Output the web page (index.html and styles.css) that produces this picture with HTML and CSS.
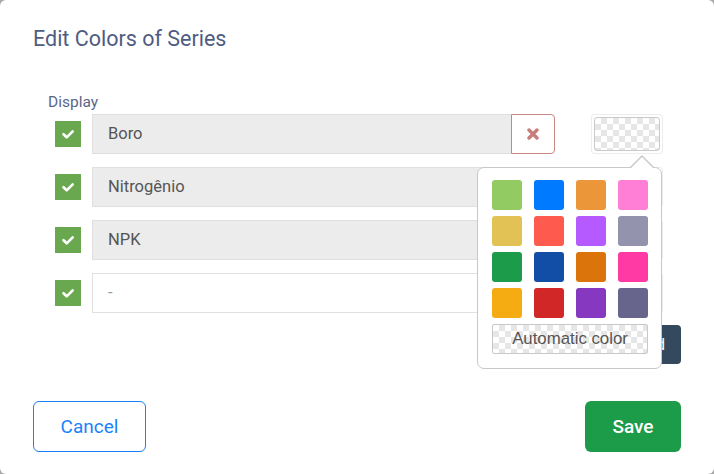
FILE: index.html
```html
<!DOCTYPE html>
<html lang="en">
<head>
<meta charset="utf-8">
<title>Edit Colors of Series</title>
<link rel="stylesheet" href="styles.css">
</head>
<body>
<div class="modal">
  <h2 class="title">Edit Colors of Series</h2>
  <div class="body">
    <div class="label">Display</div>
    <div class="rows">
      <div class="row">
        <span class="check"><svg viewBox="0 0 26 26" width="26" height="26"><path d="M8.5 13.2l3.2 3.1 6-6" fill="none" stroke="#fff" stroke-width="2.6" stroke-linecap="round" stroke-linejoin="round"/></svg></span>
        <div class="name filled">Boro</div>
        <button class="remove"><svg viewBox="0 0 12 12" width="12" height="12"><path d="M2 2L10 10M10 2L2 10" stroke="#c97d7b" stroke-width="3.4" stroke-linecap="round"/></svg></button>
        <div class="swatch-btn"><span class="swatch checker"></span></div>
      </div>
      <div class="row">
        <span class="check"><svg viewBox="0 0 26 26" width="26" height="26"><path d="M8.5 13.2l3.2 3.1 6-6" fill="none" stroke="#fff" stroke-width="2.6" stroke-linecap="round" stroke-linejoin="round"/></svg></span>
        <div class="name filled">Nitrogênio</div>
        <button class="remove"><svg viewBox="0 0 12 12" width="12" height="12"><path d="M2 2L10 10M10 2L2 10" stroke="#c97d7b" stroke-width="3.4" stroke-linecap="round"/></svg></button>
        <div class="swatch-btn"><span class="swatch checker"></span></div>
      </div>
      <div class="row">
        <span class="check"><svg viewBox="0 0 26 26" width="26" height="26"><path d="M8.5 13.2l3.2 3.1 6-6" fill="none" stroke="#fff" stroke-width="2.6" stroke-linecap="round" stroke-linejoin="round"/></svg></span>
        <div class="name filled">NPK</div>
        <button class="remove"><svg viewBox="0 0 12 12" width="12" height="12"><path d="M2 2L10 10M10 2L2 10" stroke="#c97d7b" stroke-width="3.4" stroke-linecap="round"/></svg></button>
        <div class="swatch-btn"><span class="swatch checker"></span></div>
      </div>
      <div class="row">
        <span class="check"><svg viewBox="0 0 26 26" width="26" height="26"><path d="M8.5 13.2l3.2 3.1 6-6" fill="none" stroke="#fff" stroke-width="2.6" stroke-linecap="round" stroke-linejoin="round"/></svg></span>
        <div class="name empty">-</div>
        <button class="remove"><svg viewBox="0 0 12 12" width="12" height="12"><path d="M2 2L10 10M10 2L2 10" stroke="#c97d7b" stroke-width="3.4" stroke-linecap="round"/></svg></button>
        <div class="swatch-btn"><span class="swatch checker"></span></div>
      </div>
    </div>
    <div class="add-row"><button class="add">Add</button></div>
  </div>
  <div class="footer">
    <button class="cancel">Cancel</button>
    <button class="save">Save</button>
  </div>

  <div class="popover">
    <div class="grid">
      <span class="color c1"></span><span class="color c2"></span><span class="color c3"></span><span class="color c4"></span>
      <span class="color c5"></span><span class="color c6"></span><span class="color c7"></span><span class="color c8"></span>
      <span class="color c9"></span><span class="color c10"></span><span class="color c11"></span><span class="color c12"></span>
      <span class="color c13"></span><span class="color c14"></span><span class="color c15"></span><span class="color c16"></span>
    </div>
    <button class="auto checker">Automatic color</button>
  </div>
</div>
</body>
</html>
```
FILE: styles.css
```css
* { box-sizing: border-box; }
html, body { margin: 0; padding: 0; }
body {
  background: #a9a9a9;
  width: 714px;
  height: 474px;
  overflow: hidden;
  font-family: Roboto, "Liberation Sans", sans-serif;
}
.modal {
  position: relative;
  width: 714px;
  height: 474px;
  background: #fff;
  border-radius: 6px;
  padding: 0 33px;
  display: flex;
  flex-direction: column;
}
.title {
  margin: 26px 0 0;
  font-size: 21.5px;
  line-height: 26px;
  font-weight: 400;
  color: #4f5c82;
}
.body {
  padding-left: 15px;
}
.label {
  margin-top: 41px;
  font-size: 15.5px;
  line-height: 18px;
  color: #5a6688;
}
.rows {
  margin-top: 3px;
  display: flex;
  flex-direction: column;
  gap: 13px;
}
.row {
  display: flex;
  align-items: center;
  height: 40px;
}
.check {
  width: 26px;
  height: 26px;
  margin-left: 7px;
  margin-right: 11px;
  background: #6aa84f;
  display: flex;
}
.name {
  width: 419px;
  height: 40px;
  border: 1px solid #e0e0e0;
  border-right: none;
  padding-left: 15px;
  font-size: 16.5px;
  line-height: 38px;
  color: #555;
}
.name.filled { background: #ececec; }
.name.empty { background: #fff; color: #999; }
.remove {
  width: 44px;
  height: 40px;
  padding: 0;
  background: #fff;
  border: 1px solid #c98682;
  border-radius: 0 4px 4px 0;
  display: flex;
  align-items: center;
  justify-content: center;
}
.swatch-btn {
  margin-left: 36px;
  width: 72px;
  height: 40px;
  border: 1px solid #ececec;
  border-radius: 3px;
  padding: 2px;
  display: flex;
}
.swatch {
  flex: 1;
  border: 1px solid #c9c9c9;
  border-radius: 3px;
}
.checker {
  background-color: #fff;
  background-image:
    linear-gradient(45deg, #e6e6e6 25%, transparent 25%, transparent 75%, #e6e6e6 75%),
    linear-gradient(45deg, #e6e6e6 25%, transparent 25%, transparent 75%, #e6e6e6 75%);
  background-size: 12px 12px;
  background-position: 0 0, 6px 6px;
}
.add-row {
  display: flex;
  justify-content: flex-end;
  margin-top: 12px;
}
.add {
  height: 39px;
  padding: 0 16px;
  background: #34495e;
  color: #fff;
  border: none;
  border-radius: 4px;
  font-family: Roboto, sans-serif;
  font-size: 16px;
}
.footer {
  margin-top: 37px;
  display: flex;
  justify-content: space-between;
}
.footer button {
  height: 51px;
  border-radius: 6px;
  font-family: Roboto, sans-serif;
  font-size: 19px;
}
.cancel {
  width: 113px;
  background: #fff;
  border: 1px solid #1a7ff9;
  color: #1a82fb;
}
.save {
  width: 96px;
  background: #1c9b48;
  border: none;
  color: #fff;
  font-weight: 500;
}
.popover {
  position: absolute;
  left: 477px;
  top: 167px;
  width: 185px;
  height: 202px;
  background: #fff;
  border: 1px solid #c8c8c8;
  border-radius: 7px;
  padding: 12px 14px;
}
.popover::before,
.popover::after {
  content: "";
  position: absolute;
  left: 152px;
  width: 0;
  height: 0;
  border-left: 12px solid transparent;
  border-right: 12px solid transparent;
}
.popover::before {
  top: -13px;
  border-bottom: 12px solid #c8c8c8;
}
.popover::after {
  top: -11px;
  border-bottom: 12px solid #fff;
}
.grid {
  display: grid;
  grid-template-columns: repeat(4, 30px);
  column-gap: 12px;
  row-gap: 6px;
}
.color {
  width: 30px;
  height: 30px;
  border-radius: 3px;
}
.c1 { background: #93cb63; }
.c2 { background: #007bff; }
.c3 { background: #ec963a; }
.c4 { background: #ff7fd6; }
.c5 { background: #e2c155; }
.c6 { background: #fe5a4d; }
.c7 { background: #b55aff; }
.c8 { background: #9393ae; }
.c9 { background: #1c9c4a; }
.c10 { background: #134ea6; }
.c11 { background: #dc740c; }
.c12 { background: #ff3aa4; }
.c13 { background: #f5ac12; }
.c14 { background: #d22727; }
.c15 { background: #8638c0; }
.c16 { background: #67658b; }
.auto {
  margin-top: 6px;
  width: 156px;
  height: 30px;
  border: 1px solid #c8c8c8;
  border-radius: 2px;
  padding: 0;
  font-family: "Liberation Sans", Arial, sans-serif;
  font-size: 16.8px;
  color: #555;
}
```
